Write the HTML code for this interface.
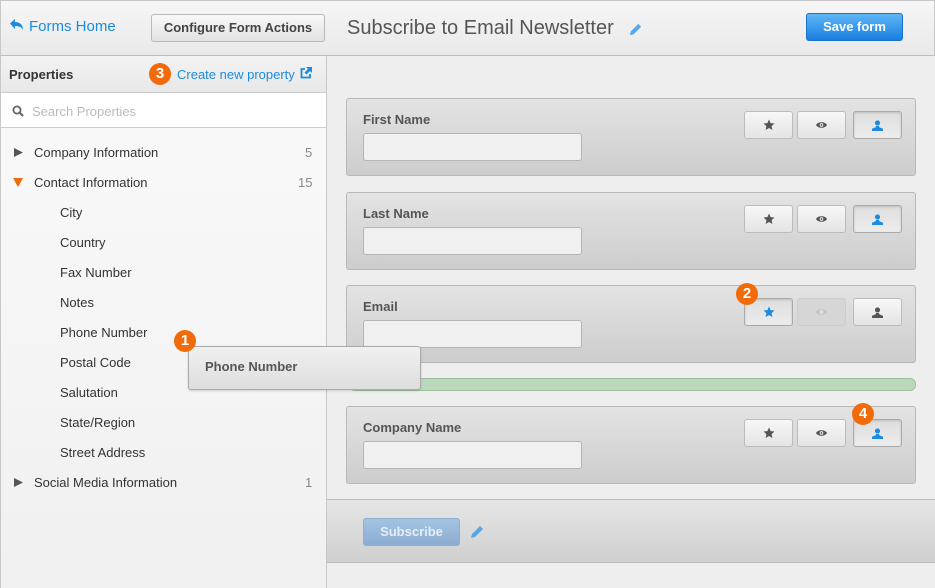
<!DOCTYPE html>
<html><head><style>
*{box-sizing:border-box;margin:0;padding:0}
body{width:935px;height:588px;overflow:hidden;font-family:"Liberation Sans",sans-serif;background:#eee;position:relative;color:#333}
.abs{position:absolute}
.hdr{left:0;top:0;width:935px;height:56px;background:linear-gradient(#f6f6f6,#e9e9e9);border:1px solid #c8c8c8;border-bottom:1px solid #bdbdbd}
.btn{border:1px solid #b8b8b8;border-radius:3px;background:linear-gradient(#f8f8f8,#e2e2e2);font-weight:bold;font-size:13px;color:#444;text-align:center}
.side{left:0;top:56px;width:327px;height:532px;background:linear-gradient(#fafafa,#f0f0f0);border-right:1px solid #c8c8c8;border-left:1px solid #c8c8c8}
.card{left:346px;width:570px;height:78px;border:1px solid #b8b8b8;border-radius:3px;background:linear-gradient(#e3e3e3,#cdcdcd)}
.card .lbl{position:absolute;left:16px;top:13px;font-weight:bold;font-size:13px;color:#555}
.card .inp{position:absolute;left:16px;top:34px;width:219px;height:28px;background:#f0f0f0;border:1px solid #b5b5b5;border-radius:3px}
.tb{position:absolute;top:12px;width:49px;height:28px;border:1px solid #bbb;border-radius:3px;background:linear-gradient(#f7f7f7,#e4e4e4);display:flex;align-items:center;justify-content:center}
.tb.on{background:linear-gradient(#dedede,#ececec);border-color:#aaa;box-shadow:inset 0 1px 2px rgba(0,0,0,.15)}
.li{position:absolute;font-size:13px;color:#333}
.cnt{position:absolute;font-size:13px;color:#888}
.badge{position:absolute;width:22px;height:22px;border-radius:11px;background:#f26b0a;color:#fff;font-weight:bold;font-size:15px;text-align:center;line-height:22px}
</style></head><body>
<svg width="0" height="0" style="position:absolute"><defs>
<symbol id="star" viewBox="0 0 12 12"><path d="M6 0.5l1.6 3.6 3.9.4-2.9 2.6.8 3.9L6 9 2.6 11l.8-3.9L.5 4.5l3.9-.4z"/></symbol>
<symbol id="eye" viewBox="0 0 12 8"><path d="M0 4C2 0 10 0 12 4 10 8 2 8 0 4z"/><circle cx="6" cy="4" r="2" fill="#eee"/><circle cx="6" cy="4" r="1"/></symbol>
<symbol id="per" viewBox="0 0 12 12"><circle cx="6" cy="3.2" r="2.8"/><path d="M4.5 6.5h3l.7 1.5L12 9.5V12H0V9.5L3.8 8z"/></symbol>
</defs></svg>
<div class="abs hdr"></div>
<svg class="abs" style="left:10px;top:19px" width="13" height="12" viewBox="0 0 13 12"><path d="M0 4.5L5 0v3c5 0 8 3 8 8-1.5-3-4-4-8-4v3z" fill="#1a8be0"/></svg>
<div class="abs" style="left:29px;top:18px;font-size:15px;color:#1a8be0">Forms Home</div>
<div class="abs btn" style="left:151px;top:14px;width:174px;height:28px;line-height:26px">Configure Form Actions</div>
<div class="abs" style="left:347px;top:17px;font-size:20px;color:#555">Subscribe to Email Newsletter</div>
<svg class="abs" style="left:628px;top:22px" width="15" height="15" viewBox="0 0 16 16"><path d="M2 14l1-4 8-8 3 3-8 8z" fill="#5aa7e6"/></svg>
<div class="abs" style="left:806px;top:13px;width:97px;height:28px;border-radius:3px;background:linear-gradient(#5db6f6,#1b7fe0);border:1px solid #1a74cc;color:#fff;font-weight:bold;font-size:13px;text-align:center;line-height:26px">Save form</div>

<div class="abs side"></div>
<div class="abs" style="left:1px;top:56px;width:325px;height:37px;background:linear-gradient(#f3f3f3,#e8e8e8);border-bottom:1px solid #ccc"></div>
<div class="abs" style="left:9px;top:67px;font-weight:bold;font-size:13px;color:#333">Properties</div>
<div class="badge" style="left:149px;top:63px">3</div>
<div class="abs" style="left:177px;top:67px;font-size:13px;color:#1a8be0">Create new property</div>
<svg class="abs" style="left:300px;top:67px" width="12" height="12" viewBox="0 0 12 12"><path d="M5 2H1.5v8.5H10V7" fill="none" stroke="#1a8be0" stroke-width="1.8"/><path d="M6 0h6v6L10 4 6.5 7.5 4.5 5.5 8 2z" fill="#1a8be0"/></svg>
<div class="abs" style="left:1px;top:93px;width:325px;height:35px;background:#fff;border-bottom:1px solid #ccc"></div>
<svg class="abs" style="left:12px;top:105px" width="12" height="12" viewBox="0 0 12 12"><circle cx="5" cy="5" r="3.6" fill="none" stroke="#666" stroke-width="1.8"/><path d="M7.5 7.5L11 11" stroke="#666" stroke-width="2.2"/></svg>
<div class="abs" style="left:32px;top:104px;font-size:13px;color:#bbb">Search Properties</div>
<svg class="abs" style="left:14px;top:148px" width="9" height="9"><path d="M0 0L9 4.5 0 9z" fill="#555"/></svg>
<div class="li" style="left:34px;top:145px">Company Information</div><div class="cnt" style="top:145px;left:305px">5</div>
<svg class="abs" style="left:13px;top:178px" width="10" height="9"><path d="M0 0H10L5 9z" fill="#f26b0a"/></svg>
<div class="li" style="left:34px;top:175px">Contact Information</div><div class="cnt" style="top:175px;left:298px">15</div>
<div class="li" style="left:60px;top:205px">City</div>
<div class="li" style="left:60px;top:235px">Country</div>
<div class="li" style="left:60px;top:265px">Fax Number</div>
<div class="li" style="left:60px;top:295px">Notes</div>
<div class="li" style="left:60px;top:325px">Phone Number</div>
<div class="li" style="left:60px;top:355px">Postal Code</div>
<div class="li" style="left:60px;top:385px">Salutation</div>
<div class="li" style="left:60px;top:415px">State/Region</div>
<div class="li" style="left:60px;top:445px">Street Address</div>
<svg class="abs" style="left:14px;top:478px" width="9" height="9"><path d="M0 0L9 4.5 0 9z" fill="#555"/></svg>
<div class="li" style="left:34px;top:475px">Social Media Information</div><div class="cnt" style="top:475px;left:305px">1</div>

<div class="card abs" style="top:98px"><div class="lbl">First Name</div><div class="inp"></div>
<div class="tb" style="left:397px"><svg width="12" height="12" fill="#555"><use href="#star"/></svg></div><div class="tb" style="left:450px"><svg width="11" height="8" fill="#555"><use href="#eye"/></svg></div><div class="tb on" style="left:506px"><svg width="11" height="11" fill="#1a8be0"><use href="#per"/></svg></div></div>
<div class="card abs" style="top:192px"><div class="lbl">Last Name</div><div class="inp"></div>
<div class="tb" style="left:397px"><svg width="12" height="12" fill="#555"><use href="#star"/></svg></div><div class="tb" style="left:450px"><svg width="11" height="8" fill="#555"><use href="#eye"/></svg></div><div class="tb on" style="left:506px"><svg width="11" height="11" fill="#1a8be0"><use href="#per"/></svg></div></div>
<div class="card abs" style="top:285px"><div class="lbl">Email</div><div class="inp"></div>
<div class="tb on" style="left:397px"><svg width="12" height="12" fill="#1a8be0"><use href="#star"/></svg></div><div class="tb" style="left:450px;background:#d6d6d6;border-color:#ccc"><svg width="11" height="8" fill="#c4c4c4"><use href="#eye"/></svg></div><div class="tb" style="left:506px"><svg width="11" height="11" fill="#555"><use href="#per"/></svg></div></div>
<div class="abs" style="left:349px;top:378px;width:567px;height:13px;background:#bcd8bc;border:1px solid #9fc09f;border-radius:6px"></div>
<div class="card abs" style="top:406px"><div class="lbl">Company Name</div><div class="inp"></div>
<div class="tb" style="left:397px"><svg width="12" height="12" fill="#555"><use href="#star"/></svg></div><div class="tb" style="left:450px"><svg width="11" height="8" fill="#555"><use href="#eye"/></svg></div><div class="tb on" style="left:506px"><svg width="11" height="11" fill="#1a8be0"><use href="#per"/></svg></div></div>
<div class="badge" style="left:736px;top:283px">2</div>
<div class="badge" style="left:852px;top:403px">4</div>

<div class="abs" style="left:327px;top:499px;width:608px;height:64px;background:linear-gradient(#e6e6e6,#cfcfcf);border-top:1px solid #bbb;border-bottom:1px solid #bbb"></div>
<div class="abs" style="left:363px;top:518px;width:97px;height:28px;border-radius:3px;background:linear-gradient(#a3c4e0,#8cadd3);border:1px solid #8fb0d3;color:#e4eef8;font-weight:bold;font-size:13px;text-align:center;line-height:26px">Subscribe</div>
<svg class="abs" style="left:469px;top:524px" width="16" height="16" viewBox="0 0 16 16"><path d="M2 14l1-4 8-8 3 3-8 8z" fill="#5aa7e6"/></svg>

<div class="abs" style="left:188px;top:346px;width:233px;height:44px;border:1px solid #aaa;border-radius:3px;background:linear-gradient(#f0f0f0,#dedede);box-shadow:0 1px 2px rgba(0,0,0,.15)"></div>
<div class="abs" style="left:205px;top:359px;font-weight:bold;font-size:13px;color:#555">Phone Number</div>
<div class="badge" style="left:174px;top:330px">1</div>
</body></html>
